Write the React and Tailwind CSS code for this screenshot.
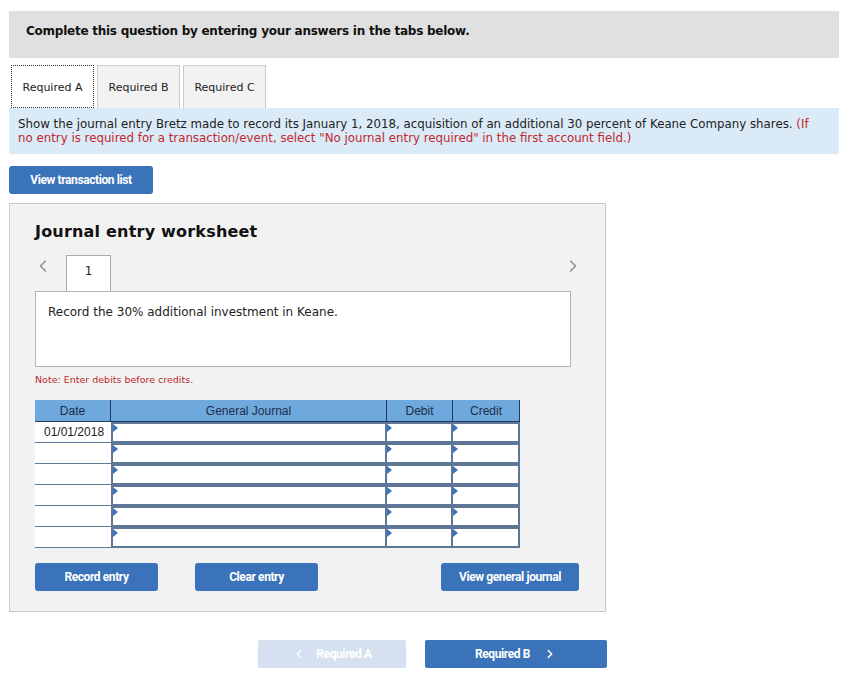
import { ChevronLeft, ChevronRight } from 'lucide-react';

const verdana = { fontFamily: '"DejaVu Sans", Verdana, sans-serif' };

function Tab({ label, active }) {
  return (
    <div
      className={
        'h-[43px] w-[83px] flex items-center justify-center pt-[3px] text-[11px] text-[#222] ' +
        (active ? 'bg-white border border-dotted border-[#333]' : 'bg-[#f2f2f2] border border-[#ccc] border-b-0')
      }
    >
      {label}
    </div>
  );
}

function BlueButton({ children, className }) {
  return (
    <button
      className={'shrink-0 h-7 rounded-[3px] bg-[#3a73b9] text-white text-[12px] font-bold tracking-[-0.4px] ' + className}
      style={{ fontFamily: 'Roboto, Arial, sans-serif' }}
    >
      {children}
    </button>
  );
}

function Marker() {
  return (
    <span className="absolute left-0 top-0 w-0 h-0 border-t-[4px] border-b-[4px] border-l-[5px] border-t-transparent border-b-transparent border-l-[#3a73b9]" />
  );
}

function InputCell({ className }) {
  return (
    <div className={'relative bg-white border-2 border-[#5e7797] ' + className}>
      <Marker />
    </div>
  );
}

export default function App() {
  const rows = ['01/01/2018', '', '', '', '', ''];

  return (
    <div className="w-[843px] h-[683px] bg-white pt-[11px] pl-[9px] pr-[4px]" style={verdana}>
      <div className="h-[47px] bg-[#e0e0e0] pl-[17px] pt-[11px]">
        <p className="text-[12px] font-bold text-[#111] tracking-[-0.25px]">Complete this question by entering your answers in the tabs below.</p>
      </div>

      <div className="flex gap-[3px] mt-[7px] pl-[2px]">
        <Tab label="Required A" active />
        <Tab label="Required B" />
        <Tab label="Required C" />
      </div>

      <div className="bg-[#dbeaf7] h-[46px] pl-[9px] pr-[20px] pt-[9px] text-[11.8px] leading-[14px] text-[#222]">
        Show the journal entry Bretz made to record its January 1, 2018, acquisition of an additional 30 percent of Keane Company shares.{' '}
        <span className="text-[#c0282d]">
          (If no entry is required for a transaction/event, select "No journal entry required" in the first account field.)
        </span>
      </div>

      <BlueButton className="w-[144px] mt-[12px]">View transaction list</BlueButton>

      <div className="mt-[9px] w-[597px] h-[409px] bg-[#f2f2f2] border border-[#c8c8c8] pl-[25px] pt-[16px]">
        <h2 className="text-[16px] font-bold text-[#111] tracking-[0.2px]">Journal entry worksheet</h2>

        <div className="flex items-end mt-[11px] h-[36px] w-[548px]">
          <ChevronLeft className="w-[20px] h-[20px] text-[#888] mb-[15px] ml-[-2px]" strokeWidth={1.5} />
          <div className="ml-[13px] w-[45px] h-[36px] bg-white border border-[#aaa] border-b-0 flex items-start justify-center pt-[6px] text-[12px] text-[#222]">
            1
          </div>
          <div className="flex-1" />
          <ChevronRight className="w-[20px] h-[20px] text-[#888] mb-[15px]" strokeWidth={1.5} />
        </div>

        <div className="w-[536px] h-[76px] bg-white border border-[#b5b5b5] px-[12px] pt-[11px] text-[12px] text-[#222]">
          Record the 30% additional investment in Keane.
        </div>

        <p className="mt-[6px] text-[9.5px] text-[#c0282d]">Note: Enter debits before credits.</p>

        <div className="mt-[13px] w-[485px]" style={{ fontFamily: '"Liberation Sans", Arial, sans-serif' }}>
          <div className="flex h-[22px] bg-[#6fa8dc] text-[12px] text-[#1b2d4a] border-b border-[#1f3a5c]">
            <div className="w-[76px] flex items-center justify-center border-r border-[#1f3a5c]">Date</div>
            <div className="w-[276px] flex items-center justify-center border-r border-[#1f3a5c]">General Journal</div>
            <div className="w-[66px] flex items-center justify-center border-r border-[#1f3a5c]">Debit</div>
            <div className="w-[67px] flex items-center justify-center border-r border-[#1f3a5c]">Credit</div>
          </div>
          {rows.map((d, i) => (
            <div key={i} className="flex h-[21px]">
              <div className="w-[76px] bg-white border-b border-[#5e7797] flex items-center pl-[9px] text-[12px] text-[#222]">
                {d}
              </div>
              <InputCell className="w-[276px]" />
              <InputCell className="w-[66px] border-l-0" />
              <InputCell className="w-[67px] border-l-0" />
            </div>
          ))}
        </div>

        <div className="flex mt-[15px]">
          <BlueButton className="w-[123px]">Record entry</BlueButton>
          <BlueButton className="w-[123px] ml-[37px]">Clear entry</BlueButton>
          <BlueButton className="w-[138px] ml-[123px]">View general journal</BlueButton>
        </div>
      </div>

      <div className="flex mt-[28px] ml-[249px] gap-[19px]">
        <button
          className="h-7 w-[148px] rounded-[2px] bg-[#d5e1f0] text-white text-[12px] font-bold tracking-[-0.4px] flex items-center justify-center gap-[10px]"
          style={{ fontFamily: 'Roboto, Arial, sans-serif' }}
        >
          <ChevronLeft className="w-[14px] h-[14px]" strokeWidth={2} />
          Required A
        </button>
        <button
          className="h-7 w-[182px] rounded-[2px] bg-[#3a73b9] text-white text-[12px] font-bold tracking-[-0.4px] flex items-center justify-center gap-[13px]"
          style={{ fontFamily: 'Roboto, Arial, sans-serif' }}
        >
          Required B
          <ChevronRight className="w-[14px] h-[14px]" strokeWidth={2.5} />
        </button>
      </div>
    </div>
  );
}
